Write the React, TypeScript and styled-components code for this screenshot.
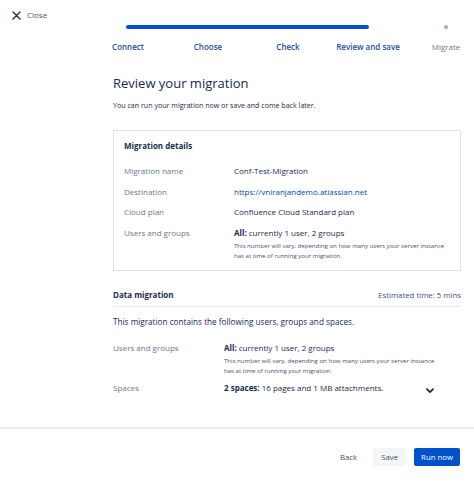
import React from "react";
import styled, { createGlobalStyle } from "styled-components";

const GlobalStyle = createGlobalStyle`
  html, body {
    margin: 0;
    padding: 0;
    background: #ffffff;
  }
  body {
    font-family: "Open Sans", "Noto Sans", sans-serif;
    color: #172b4d;
  }
`;

type Step = { label: string; done: boolean };

const steps: Step[] = [
  { label: "Connect", done: true },
  { label: "Choose", done: true },
  { label: "Check", done: true },
  { label: "Review and save", done: true },
  { label: "Migrate", done: false },
];

const Page = styled.div`
  width: 474px;
  height: 484px;
  display: flex;
  flex-direction: column;
  overflow: hidden;
`;

const TopBar = styled.div`
  padding: 9px 12px 0;
  height: 12px;
`;

const CloseButton = styled.button`
  display: flex;
  align-items: center;
  gap: 6px;
  border: 0;
  background: none;
  padding: 0;
  font-family: inherit;
  font-size: 8px;
  color: #42526e;
  line-height: 12px;
`;

const Main = styled.main`
  padding: 0 13px 0 113px;
`;

const Progress = styled.div`
  display: flex;
  align-items: center;
  margin: 4px 0 0 13px;
  width: 322px;
  height: 4px;
`;

const ProgressFill = styled.div`
  height: 4px;
  border-radius: 2px;
  background: #0052cc;
`;

const ProgressDot = styled.span`
  margin-left: auto;
  width: 4px;
  height: 4px;
  border-radius: 50%;
  background: #a5adba;
`;

const StepList = styled.ol`
  list-style: none;
  display: grid;
  grid-template-columns: repeat(4, 80px) 76px;
  margin: 12px 0 0 -25px;
  padding: 0;
`;

const StepLabel = styled.li<{ $done: boolean }>`
  text-align: center;
  white-space: nowrap;
  font-size: 8px;
  line-height: 12px;
  font-weight: ${(p) => (p.$done ? 600 : 400)};
  color: ${(p) => (p.$done ? "#1f4ba5" : "#6b778c")};
`;

const Heading = styled.h1`
  margin: 20px 0 0;
  font-size: 13px;
  line-height: 20px;
  font-weight: 400;
  color: #172b4d;
`;

const Lead = styled.p`
  margin: 6px 0 0;
  font-size: 7.1px;
  line-height: 12px;
`;

const Card = styled.section`
  margin-top: 19px;
  border: 1px solid #dfe1e6;
  padding: 9px 10px 9px 10px;
`;

const CardTitle = styled.h2`
  margin: 0;
  font-size: 8px;
  line-height: 12px;
  font-weight: 700;
`;

const DetailGrid = styled.div<{ $label: number; $gap: number; $top: number }>`
  display: grid;
  grid-template-columns: ${(p) => p.$label}px 1fr;
  row-gap: ${(p) => p.$gap}px;
  margin-top: ${(p) => p.$top}px;
`;

const Label = styled.div`
  font-size: 8px;
  line-height: 12px;
  color: #6b778c;
`;

const Value = styled.div`
  font-size: 8px;
  line-height: 12px;
  color: #172b4d;

  b {
    font-weight: 700;
  }
`;

const ValueRow = styled(Value)`
  display: flex;
  align-items: flex-start;
  justify-content: space-between;
  padding-right: 27px;
`;

const Chevron = styled.span`
  display: flex;
  padding-top: 6px;
`;

const Link = styled.a`
  color: #0747a6;
  text-decoration: none;
`;

const Note = styled.div`
  margin-top: 2px;
  max-width: 212px;
  font-size: 6.1px;
  line-height: 10px;
  color: #42526e;
`;

const SectionHeader = styled.div`
  display: flex;
  justify-content: space-between;
  align-items: center;
  margin-top: 18px;
  padding-bottom: 5px;
  border-bottom: 1px solid #ebecf0;
  font-size: 7.8px;
  line-height: 12px;
`;

const SectionTitle = styled.h2`
  margin: 0;
  font-size: 8px;
  font-weight: 700;
`;

const Estimate = styled.span`
  color: #42526e;
`;

const SectionText = styled.p`
  margin: 9px 0 0;
  font-size: 8.2px;
  line-height: 12px;
`;

const Footer = styled.footer`
  margin-top: auto;
  height: 55px;
  border-top: 2px solid #ebecf0;
  display: flex;
  justify-content: flex-end;
  align-items: center;
  gap: 8px;
  padding: 0 14px 0 0;
`;

const Button = styled.button<{ $kind: "subtle" | "default" | "primary" }>`
  height: 18px;
  padding: 0 ${(p) => (p.$kind === "primary" ? 7 : 8)}px;
  border: 0;
  border-radius: 2px;
  font-family: inherit;
  font-size: 7.8px;
  line-height: 18px;
  background: ${(p) =>
    p.$kind === "primary" ? "#0052cc" : p.$kind === "default" ? "#f4f5f7" : "transparent"};
  color: ${(p) => (p.$kind === "primary" ? "#ffffff" : "#42526e")};
`;

const CloseIcon = () => (
  <svg width="9" height="9" viewBox="0 0 9 9">
    <path d="M1 1 L8 8 M8 1 L1 8" stroke="#172b4d" strokeWidth="1.4" strokeLinecap="round" />
  </svg>
);

const ChevronIcon = () => (
  <svg width="8" height="6" viewBox="0 0 8 6">
    <path d="M1 1.2 L4 4.2 L7 1.2" fill="none" stroke="#172b4d" strokeWidth="1.8" strokeLinecap="round" strokeLinejoin="round" />
  </svg>
);

const noteText =
  "This number will vary, depending on how many users your server instance has at time of running your migration.";

export default function App() {
  return (
    <Page>
      <GlobalStyle />
      <TopBar>
        <CloseButton>
          <CloseIcon />
          Close
        </CloseButton>
      </TopBar>
      <Main>
        <Progress>
          <ProgressFill style={{ width: `${(243 / 322) * 100}%` }} />
          <ProgressDot />
        </Progress>
        <StepList>
          {steps.map((s) => (
            <StepLabel key={s.label} $done={s.done}>
              {s.label}
            </StepLabel>
          ))}
        </StepList>

        <Heading>Review your migration</Heading>
        <Lead>You can run your migration now or save and come back later.</Lead>

        <Card>
          <CardTitle>Migration details</CardTitle>
          <DetailGrid $label={110} $gap={8.5} $top={13}>
            <Label>Migration name</Label>
            <Value>Conf-Test-Migration</Value>
            <Label>Destination</Label>
            <Value>
              <Link href="#">https://vniranjandemo.atlassian.net</Link>
            </Value>
            <Label>Cloud plan</Label>
            <Value>Confluence Cloud Standard plan</Value>
            <Label>Users and groups</Label>
            <Value>
              <b>All:</b> currently 1 user, 2 groups
              <Note>{noteText}</Note>
            </Value>
          </DetailGrid>
        </Card>

        <SectionHeader>
          <SectionTitle>Data migration</SectionTitle>
          <Estimate>Estimated time: 5 mins</Estimate>
        </SectionHeader>
        <SectionText>This migration contains the following users, groups and spaces.</SectionText>
        <DetailGrid $label={111} $gap={6.5} $top={14}>
          <Label>Users and groups</Label>
          <Value>
            <b>All:</b> currently 1 user, 2 groups
            <Note>{noteText}</Note>
          </Value>
          <Label>Spaces</Label>
          <ValueRow>
            <span>
              <b>2 spaces:</b> 16 pages and 1 MB attachments.
            </span>
            <Chevron>
              <ChevronIcon />
            </Chevron>
          </ValueRow>
        </DetailGrid>
      </Main>
      <Footer>
        <Button $kind="subtle">Back</Button>
        <Button $kind="default">Save</Button>
        <Button $kind="primary">Run now</Button>
      </Footer>
    </Page>
  );
}
